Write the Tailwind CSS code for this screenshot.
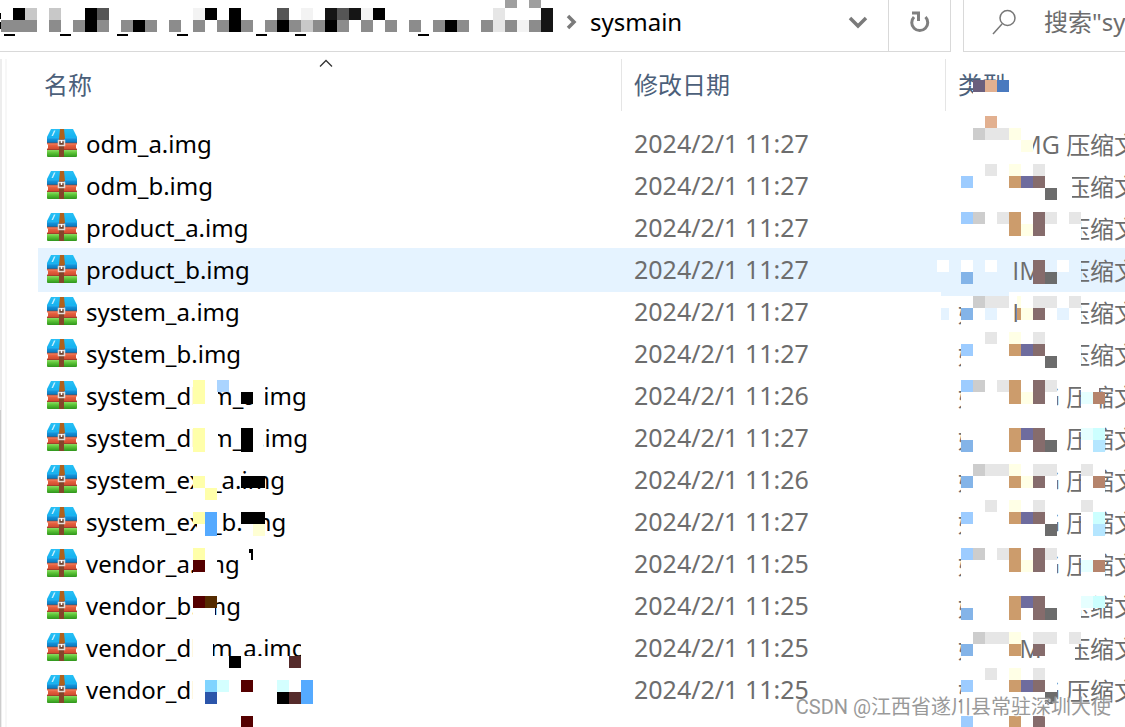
<!DOCTYPE html>
<html lang="zh-CN">
<head>
<meta charset="utf-8">
<meta name="viewport" content="width=device-width, initial-scale=1">
<title>sysmain</title>
<script src="https://cdn.jsdelivr.net/npm/@tailwindcss/browser@4"></script>
</head>
<body class="relative flex h-screen flex-col overflow-hidden bg-white font-['Noto_Sans','Noto_Sans_CJK_SC',sans-serif] text-2xl text-black">
<svg class="absolute h-0 w-0" aria-hidden="true">
  <defs>
    <linearGradient id="blue" x1="0" y1="0" x2="0" y2="1"><stop offset="0" stop-color="#28c0f5"/><stop offset=".6" stop-color="#16b2f0"/><stop offset=".64" stop-color="#35b5ee"/><stop offset=".7" stop-color="#1495dc"/><stop offset="1" stop-color="#0874b8"/></linearGradient>
    <linearGradient id="red" x1="0" y1="0" x2="0" y2="1"><stop offset="0" stop-color="#f58a6c"/><stop offset=".35" stop-color="#e5603f"/><stop offset="1" stop-color="#c9452b"/></linearGradient>
    <linearGradient id="green" x1="0" y1="0" x2="0" y2="1"><stop offset="0" stop-color="#8bdc63"/><stop offset=".4" stop-color="#5cc437"/><stop offset="1" stop-color="#2f951c"/></linearGradient>
    <symbol id="archive" viewBox="0 0 30 28">
      <path d="M4 0H26L30 8V14H0V8Z" fill="url(#blue)"/>
      <path d="M0 14H30V15L29 16V19L30 20V21H0V20L1 19V16L0 15Z" fill="url(#red)"/>
      <path d="M0 21H30V27Q30 28 29 28H1Q0 28 0 27Z" fill="url(#green)"/>
      <path d="M0 14H30M0 20.500H30" stroke="#873b2b" stroke-opacity=".6"/>
      <path d="M7 1.500H8.500L6 7H4.500Z" fill="#c5efff"/>
      <path d="M13 0H17L18 10H12Z" fill="#b0611d"/>
      <path d="M12 10H17V28H12Z" fill="#85452a"/>
      <rect x="11.500" y="11.500" width="6" height="5" fill="#71412c" stroke="#e2dcd8" stroke-width="1.500"/>
      <path d="M14.500 11V14" stroke="#fff" stroke-width="1.500"/>
    </symbol>
  </defs>
</svg>

<header class="flex h-[52px] shrink-0 bg-white">
  <nav aria-label="地址" class="flex min-w-0 flex-1 items-center border-b border-[#d9d9d9] pb-2">
    <div class="w-[566px] shrink-0"></div>
    <svg class="h-4 w-3 shrink-0" viewBox="0 0 12 16" fill="none" stroke="#7a7a7a" stroke-width="3.500"><path d="M2 2 8 8 2 14"/></svg>
    <button class="ml-3">sysmain</button>
    <button aria-label="以前的位置" class="mr-5 ml-auto"><svg class="h-5 w-5" viewBox="0 0 20 20" fill="none" stroke="#7a7a7a" stroke-width="3.500"><path d="M2 6 10 14 18 6"/></svg></button>
  </nav>
  <button aria-label="刷新" class="flex w-[63px] shrink-0 items-center justify-center border-x border-b border-[#d9d9d9] pb-2">
    <svg class="h-6 w-6" viewBox="0 0 24 24" fill="none" stroke="#7f7f7f" stroke-width="3"><path d="M17.500 7A8 8 0 1 1 6 7"/><path d="M4 3H10.500V11"/></svg>
  </button>
  <label class="ml-3 flex w-[162px] shrink-0 items-center overflow-hidden border-b border-l border-[#d9d9d9] pb-2 pl-7">
    <svg class="h-7 w-6 shrink-0" viewBox="0 0 24 28" fill="none" stroke="#777" stroke-width="1.500"><circle cx="15.500" cy="10" r="7.500"/><path d="M10 16 1 26"/></svg>
    <input aria-label="搜索" placeholder='搜索"sysmain"' class="ml-7 w-[200px] shrink-0 outline-none placeholder:text-[#6d6d6d]">
  </label>
</header>

<main class="flex min-h-0 flex-1 overflow-hidden pt-[7px]">
  <div class="flex w-[38px] shrink-0"><div class="flex w-0.5 bg-[#ededed] pt-[351px]"><div class="w-px bg-[#cdcdcd]"></div></div><div class="ml-[3px] w-0.5 bg-[#f7f7f7]"></div></div>
  <div class="min-w-0 flex-1 overflow-hidden">
    <table class="w-full table-fixed border-collapse text-left">
      <colgroup><col class="w-[584px]"><col class="w-[324px]"><col></colgroup>
      <thead class="text-[#4c607a]">
        <tr class="h-16 align-top">
          <th class="p-0 font-normal"><button class="relative flex h-[52px] w-full items-center border-r border-[#e5e5e5] pl-1.5">名称<svg class="absolute top-0 left-[281px] h-2 w-3.5" viewBox="0 0 14 8" fill="none" stroke="#333" stroke-width="1.250"><path d="M1 7.500 7 1.500 13 7.500"/></svg></button></th>
          <th class="p-0 font-normal"><button class="flex h-[52px] w-full items-center border-r border-[#e5e5e5] pl-3">修改日期</button></th>
          <th class="p-0 font-normal"><button class="flex h-[52px] w-full items-center pl-3">类型</button></th>
        </tr>
      </thead>
      <tbody id="files"></tbody>
    </table>
  </div>
</main>

<svg id="mosaic" class="pointer-events-none absolute inset-0 h-full w-full" shape-rendering="crispEdges" aria-hidden="true"></svg>
<p class="pointer-events-none absolute right-3.5 bottom-1 font-[Roboto,'Noto_Sans_CJK_SC',sans-serif] text-xl leading-8 text-[#999999] [text-shadow:1px_1px_1px_#ffffff]">CSDN @江西省遂川县常驻深圳大使</p>

<script>
const files = [
  ['odm_a.img','11:27'],['odm_b.img','11:27'],['product_a.img','11:27'],['product_b.img','11:27'],
  ['system_a.img','11:27'],['system_b.img','11:27'],['system_dlkm_a.img','11:26'],['system_dlkm_b.img','11:27'],
  ['system_ext_a.img','11:26'],['system_ext_b.img','11:27'],['vendor_a.img','11:25'],['vendor_b.img','11:25'],
  ['vendor_dlkm_a.img','11:25'],['vendor_dlkm_b.img','11:25']
];
document.getElementById('files').innerHTML = files.map(([name, time], i) => `
  <tr class="h-[42px] whitespace-nowrap ${i === 3 ? 'bg-[#e5f3ff] outline outline-[#e5f3ff]' : ''}">
    <td class="p-0"><div class="flex items-center pl-[9px] leading-10"><svg class="mb-0.5 h-7 w-[30px]"><use href="#archive"/></svg><span class="ml-[9px]">${name}</span></div></td>
    <td class="p-0 pb-0.5 pl-3 text-[25px] leading-10 text-[#6d6d6d]">2024/2/1 ${time}</td>
    <td class="overflow-hidden p-0 pl-3 font-['Open_Sans','Noto_Sans_CJK_SC',sans-serif] leading-10 text-[#6d6d6d]">好压 <span class="text-[25px]">IMG</span> 压缩文件</td>
  </tr>`).join('');

// Censoring mosaic: blank patches (x, y, width, height, colour), then 12px cells.
const W = '#ffffff', H = '#e5f3ff';
const patches = [
  [193,378,25,31,W],[253,384,12,24,W],[193,420,25,31,W],[253,428,10,22,W],
  [197,464,15,28,W],[197,506,8,30,W],[242,512,11,24,W],[253,524,14,12,W],
  [193,548,24,27,W],[193,590,22,30,W],[193,632,20,28,W],[193,656,140,12,W],[301,644,14,14,W],[193,672,140,38,W],
  [973,92,36,9,W],
  [957,128,76,30,W],[957,170,115,30,W],[957,212,124,30,W],
  [957,256,56,34,H],[1033,256,48,34,H],[941,292,68,4,H],
  [961,296,52,30,W],[1021,296,60,30,W],[961,338,120,30,W],
  [961,380,96,30,W],[1081,380,18,30,W],[961,422,99,30,W],[1081,422,24,30,W],
  [961,464,96,30,W],[1081,464,24,30,W],[961,506,96,30,W],[1081,506,24,30,W],
  [961,548,96,30,W],[1081,548,24,30,W],[961,590,120,30,W],[1081,592,12,18,W],
  [961,632,60,30,W],[1045,632,30,30,W],[961,674,96,30,W],
  [941,308,8,12,H],[1017,296,4,12,'#ffffe6'],[1017,308,4,12,'#cc9c6c'],
  [249,549,4,4,'#000000'],[251,553,2,7,'#000000'],[0,13,1,6,'#000000'],[0,22,1,7,'#000000'],
  ...[4,60,117,177,256,295,418].map(x => [x,34,11,2,'#000000'])
];
const colours = {
  K:'#000000', k:'#151515', d:'#555555', g:'#8c8c8c', s:'#c8c8c8', f:'#f3f3f3', e:'#e6e6e6', c:'#cdcdcd', h:'#9f9f9f',
  w:W, H, y:'#ffffaa', l:'#aad4ff', b:'#55aaff', Y:'#ffffd4', R:'#550000', r:'#552b00', m:'#552b2b', t:'#80d4ff',
  T:'#d4ffff', B:'#2b55aa', p:'#6b5f7d', o:'#e2b090', u:'#4a7abf', i:'#ffffe6', a:'#9dccff', A:'#84b4e8',
  n:'#cc9c6c', v:'#6e6c9e', M:'#866c6c', D:'#6c6c6c', q:'#e6ffff', Q:'#ccffff', z:'#b5846c', Z:'#b5e6ff'
};
// [row, first column, cells]; a dot leaves a cell open.
const runs = [
  [-1,41,'h.h'],
  [0,0,'Ks.s..Kd.......fK.K...d.f.kdkfK.........e...k'],
  [1,-1,'ggg.g.gKg.gKg.g.g.gKg.gKgsgKg.g.g.g.gKg.gegfgk'],
  [31,15,'y.l'],[32,15,'yw..K'],[35,15,'y...K'],[36,15,'y...K'],[39,15,'y...KK'],[40,16,'y'],
  [42,15,'yb..KK'],[43,16,'b...Y'],[45,15,'y'],[46,15,'R'],[49,15,'Rr'],[54,18,'K....m'],
  [56,16,'tT.R..T.b'],[57,16,'B.....Kmb'],[59,19,'R'],
  [6,80,'pou'],[9,81,'o'],[10,80,'ceei'],[11,84,'i'],
  [13,81,'e.i.e'],[14,79,'a...nvM'],[15,86,'D'],
  [17,79,'ac.en.Me.e'],[18,83,'niM'],
  [21,77,'w.w.w...M.w'],[22,79,'A.....MD'],
  [24,80,'cee..ee.e'],[25,79,'A.H..iM.H'],
  [27,81,'e.i.e'],[28,79,'a...nvM'],[29,86,'D'],
  [31,79,'ac.en.Me'],[32,83,'niM...qz'],
  [35,83,'nvM...qQ'],[36,79,'A...n.MD...Z'],
  [38,80,'ceei.ee..e'],[39,79,'A...niM....z'],
  [41,81,'e.i.e...e'],[42,79,'a...nvM....Q'],[43,86,'D...Z'],
  [45,79,'ac.en.Me'],[46,83,'niM...qz'],
  [49,83,'nvM...qQ'],[50,79,'A...n.MD'],
  [52,80,'ceei.ee.e'],[53,79,'A...n.M'],
  [55,81,'e.i.e'],[56,79,'a...nvM'],[57,86,'D'],[59,79,'a...n.M']
];
for (const [row, col, cells] of runs)
  [...cells].forEach((c, i) => { if (c !== '.') patches.push([13 + 12 * (col + i), 8 + 12 * row, 12, 12, colours[c]]); });
document.getElementById('mosaic').innerHTML = patches.map(([x, y, w, h, fill]) => `<rect x="${x}" y="${y}" width="${w}" height="${h}" fill="${fill}"/>`).join('');
</script>
</body>
</html>
